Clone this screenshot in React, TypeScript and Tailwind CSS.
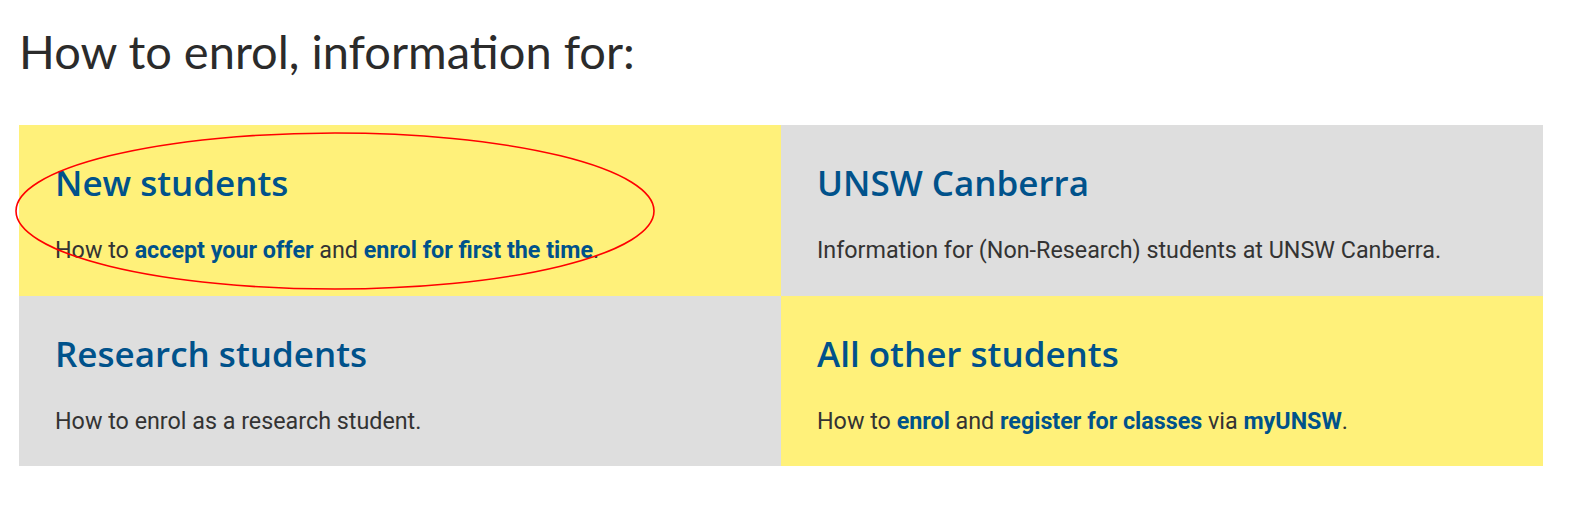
import React from "react";

const Link = ({ children }: { children: React.ReactNode }) => (
  <a href="#" className="font-bold text-[#00528b] no-underline">
    {children}
  </a>
);

function Card({
  bg,
  title,
  h,
  children,
}: {
  bg: string;
  title: string;
  h: string;
  children: React.ReactNode;
}) {
  return (
    <div className={`${bg} ${h} pl-[36px] pr-6 pt-[36px]`}>
      <h2
        className="text-[35px] leading-[44px] font-semibold text-[#00528b]"
        style={{ fontFamily: "'Open Sans', Lato, sans-serif" }}
      >
        {title}
      </h2>
      <p
        className="mt-[29px] text-[23.3px] leading-[32px] text-[#333333]"
        style={{ fontFamily: "Roboto, 'Liberation Sans', sans-serif" }}
      >
        {children}
      </p>
    </div>
  );
}

export default function App() {
  return (
    <div className="w-[1592px] h-[522px] bg-white relative overflow-hidden">
      <div className="pl-[19px] pt-[24px]">
        <h1
          className="text-[47px] leading-[54px] text-[#2b2b2b] font-normal"
          style={{ fontFamily: "Lato, 'Open Sans', sans-serif" }}
        >
          How to enrol, information for:
        </h1>
        <div className="mt-[47px] grid grid-cols-2 w-[1524px]">
          <Card bg="bg-[#fff17a]" h="h-[171px]" title="New students">
            How to <Link>accept your offer</Link> and{" "}
            <Link>enrol for first the time</Link>.
          </Card>
          <Card bg="bg-[#dedede]" h="h-[171px]" title="UNSW Canberra">
            Information for (Non-Research) students at UNSW Canberra.
          </Card>
          <Card bg="bg-[#dedede]" h="h-[170px]" title="Research students">
            How to enrol as a research student.
          </Card>
          <Card bg="bg-[#fff17a]" h="h-[170px]" title="All other students">
            How to <Link>enrol</Link> and <Link>register for classes</Link> via{" "}
            <Link>myUNSW</Link>.
          </Card>
        </div>
      </div>
      <svg
        className="absolute left-0 top-0 pointer-events-none"
        width="1592"
        height="522"
      >
        <ellipse
          cx="335"
          cy="211"
          rx="319"
          ry="78"
          fill="none"
          stroke="#ff0000"
          strokeWidth="1.6"
        />
      </svg>
    </div>
  );
}
